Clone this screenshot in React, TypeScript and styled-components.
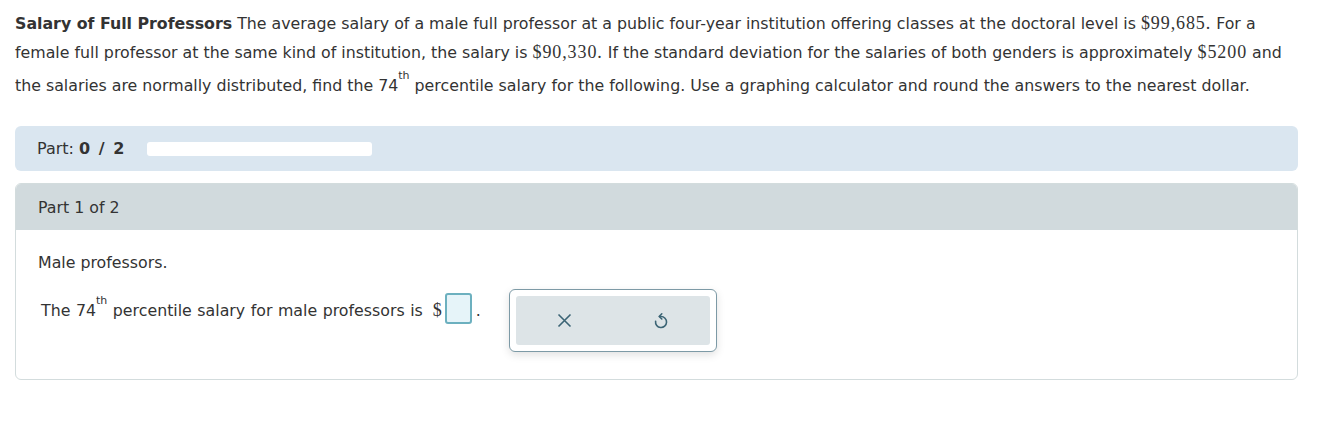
import React from 'react';
import styled, { createGlobalStyle } from 'styled-components';

const GlobalStyle = createGlobalStyle`
  body {
    margin: 0;
    background: #fff;
    font-family: 'DejaVu Sans', Verdana, sans-serif;
    color: #333;
  }
`;

const Page = styled.div`
  padding: 9px 32px 0 15px;
  display: flex;
  flex-direction: column;
`;

const Problem = styled.p`
  margin: 0 0 26px;
  font-size: 15.8px;
  line-height: 28px;
  color: #333;
`;

const Money = styled.span`
  font-family: 'Liberation Serif', 'Times New Roman', serif;
  font-size: 18px;
  letter-spacing: 0.9px;
`;

const Sup = styled.sup<{ $lh?: number }>`
  font-size: 11px;
  line-height: ${({ $lh }) => $lh ?? 17}px;
  vertical-align: 12px;
`;

const PartBar = styled.div`
  display: flex;
  align-items: center;
  gap: 23px;
  height: 45px;
  padding: 0 22px;
  background: #dae6f0;
  border-radius: 6px;
  font-size: 16px;
`;

const PartLabel = styled.span`
  b {
    font-weight: bold;
    word-spacing: 3px;
  }
`;

const Progress = styled.div`
  width: 225px;
  height: 14px;
  background: #fff;
  border-radius: 3px;
`;

const Card = styled.div`
  margin-top: 12px;
  border: 1px solid #d3dcdd;
  border-radius: 6px;
  overflow: hidden;
  width: 1281px;
`;

const CardHeader = styled.div`
  background: #d1dadd;
  height: 46px;
  display: flex;
  align-items: center;
  padding: 0 22px;
  font-size: 15.8px;
`;

const CardBody = styled.div`
  padding: 23px 22px 27px;
  font-size: 15.8px;
`;

const Line = styled.div`
  margin-bottom: 17px;
`;

const AnswerRow = styled.div`
  display: flex;
  align-items: flex-start;
  padding-left: 3px;
`;

const Sentence = styled.div`
  margin-top: 4px;
  line-height: 31px;
  white-space: nowrap;
  word-spacing: 0.5px;
`;

const Dollar = styled.span`
  font-family: 'Liberation Serif', 'Times New Roman', serif;
  font-size: 18px;
  margin: 0 3px 0 10px;
`;

const InputBox = styled.span`
  display: inline-block;
  width: 27px;
  height: 31px;
  box-sizing: border-box;
  vertical-align: -8px;
  background: #e6f4f9;
  border: 2px solid #6cb0bf;
  border-radius: 3px;
`;

const Dot = styled.span`
  margin-left: 4px;
`;

const ToolGroup = styled.div`
  margin-left: 28px;
  padding: 6px;
  border: 1px solid #7d9aa6;
  border-radius: 6px;
  box-shadow: 0 3px 8px rgba(0, 0, 0, 0.12);
  background: #fff;
`;

const ToolInner = styled.div`
  width: 194px;
  height: 49px;
  background: #dde4e7;
  border-radius: 3px;
  display: flex;
  align-items: center;
  justify-content: space-around;
`;

const IconButton = styled.span`
  display: flex;
  width: 40px;
  justify-content: center;
  color: #3b6475;
`;

const CloseIcon = () => (
  <svg width="15" height="15" viewBox="0 0 15 15" fill="none" stroke="currentColor" strokeWidth="1.6">
    <path d="M1.5 1.5 L13.5 13.5 M13.5 1.5 L1.5 13.5" />
  </svg>
);

const UndoIcon = () => (
  <svg width="16" height="18" viewBox="0 0 16 18" fill="none" stroke="currentColor" strokeWidth="1.6" strokeLinecap="round" strokeLinejoin="round">
    <path d="M6.5 4.5 H8 A5.5 5.5 0 1 1 2.6 9.2" />
    <path d="M8.8 1.8 L6.2 4.5 L8.8 7" />
  </svg>
);

export default function App() {
  return (
    <>
      <GlobalStyle />
      <Page>
        <Problem>
          <b>Salary of Full Professors</b> The average salary of a male full professor at a public four-year institution
          offering classes at the doctoral level is <Money>$99,685.</Money> For a female full professor at the same kind of
          institution, the salary is <Money>$90,330.</Money> If the standard deviation for the salaries of both genders is
          approximately <Money>$5200</Money> and the salaries are normally distributed, find the 74<Sup>th</Sup> percentile
          salary for the following. Use a graphing calculator and round the answers to the nearest dollar.
        </Problem>
        <PartBar>
          <PartLabel>
            Part: <b>0 / 2</b>
          </PartLabel>
          <Progress />
        </PartBar>
        <Card>
          <CardHeader>Part 1 of 2</CardHeader>
          <CardBody>
            <Line>Male professors.</Line>
            <AnswerRow>
              <Sentence>
                The 74<Sup $lh={11}>th</Sup> percentile salary for male professors is
                <Dollar>$</Dollar>
                <InputBox />
                <Dot>.</Dot>
              </Sentence>
              <ToolGroup>
                <ToolInner>
                  <IconButton>
                    <CloseIcon />
                  </IconButton>
                  <IconButton>
                    <UndoIcon />
                  </IconButton>
                </ToolInner>
              </ToolGroup>
            </AnswerRow>
          </CardBody>
        </Card>
      </Page>
    </>
  );
}
